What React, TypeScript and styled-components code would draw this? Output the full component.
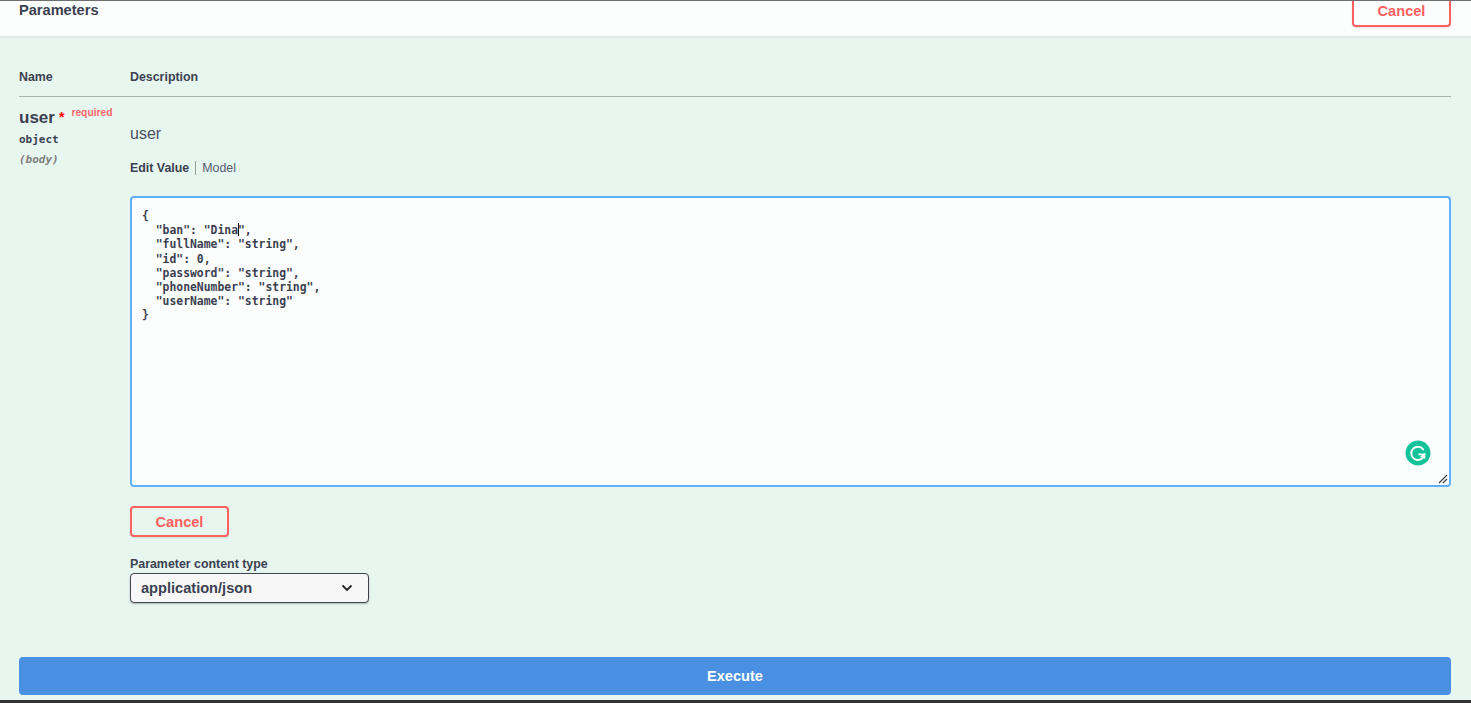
import React from 'react';
import styled, { createGlobalStyle } from 'styled-components';

const Global = createGlobalStyle`
  html, body { margin: 0; padding: 0; background: #e8f6f0; }
  body { font-family: "Liberation Sans", Arial, sans-serif; color: #3b4151; overflow: hidden; }
`;
const Page = styled.div`
  width: 1471px; height: 703px; box-sizing: border-box; display: flex; flex-direction: column;
  border-top: 1px solid #6f6f6f; border-bottom: 3px solid #333; overflow: hidden; background: #e8f6f0;
`;
const Header = styled.header`
  height: 37px; flex: none; box-sizing: border-box; background: #fcfefd; border-bottom: 2px solid #dfe7e3;
  display: flex; justify-content: space-between; align-items: flex-end; padding: 0 20px 9px 19px; overflow: hidden;
`;
const Title = styled.h4`
  margin: 0; align-self: flex-start; font: 700 14.6px/18px "Liberation Sans", Arial, sans-serif; color: #3b4151;
`;
const CancelButton = styled.button`
  width: 99px; flex: none; box-sizing: border-box; border: 2px solid #ff6060; border-radius: 4px;
  background: transparent; color: #ff6060; font: 700 14.6px "Liberation Sans", Arial, sans-serif; padding: 0;
  box-shadow: 0 1px 2px rgba(0,0,0,.1);
`;
const TopCancel = styled(CancelButton)`
  height: 36px; padding-top: 4px;
`;
const Main = styled.main`
  flex: 1; display: flex; flex-direction: column; padding: 0 20px 0 19px;
`;
const HeadRow = styled.div`
  display: grid; grid-template-columns: 111px 1fr; height: 59px; box-sizing: border-box; padding-top: 30px;
  border-bottom: 1px solid #a9b3af; font: 700 12.4px/18px "Liberation Sans", Arial, sans-serif; color: #3b4151;
`;
const BodyRow = styled.div`
  display: grid; grid-template-columns: 111px 1fr;
`;
const NameCell = styled.div`
  display: flex; flex-direction: column; padding-top: 10px;
`;
const NameLine = styled.div`
  display: flex; align-items: flex-start; height: 22px;
`;
const ParamName = styled.span`
  font: 700 17px/22px "Liberation Sans", Arial, sans-serif; color: #3b4151;
`;
const Star = styled.span`
  color: #ff0000; font: 700 14px/22px "Liberation Sans", Arial, sans-serif; margin: -1px 0 0 4px;
`;
const Required = styled.span`
  color: #ff6b6b; font: 700 10.3px/14px "Liberation Sans", Arial, sans-serif; margin: -1px 0 0 7px;
`;
const TypeText = styled.div`
  font: 700 11px/14px "DejaVu Sans Mono", monospace; color: #3b4151; margin-top: 4px;
`;
const InText = styled.div`
  font: italic 700 11px/14px "DejaVu Sans Mono", monospace; color: #7d7d7d; margin-top: 6px;
`;
const DescCell = styled.div`
  display: flex; flex-direction: column; align-items: flex-start; padding-top: 27px;
`;
const DescText = styled.p`
  margin: 0; font: 400 16px/20px "Liberation Sans", Arial, sans-serif; color: #4a5060;
`;
const Tabs = styled.div`
  display: flex; align-items: center; margin-top: 17px; height: 14px; font: 12.4px/14px "Liberation Sans", Arial, sans-serif;
`;
const Tab = styled.span<{ $active?: boolean }>`
  font-weight: ${p => (p.$active ? 700 : 400)};
  color: ${p => (p.$active ? '#3b4151' : '#555e6e')};
  & + & { border-left: 1px solid #9aa39f; margin-left: 6px; padding-left: 6px; }
`;
const Editor = styled.div`
  position: relative; margin-top: 21px; width: 100%; height: 291px; box-sizing: border-box; background: #fcfefd;
  border: 2px solid #61affe; border-radius: 4px; padding: 11px 10px;
`;
const Code = styled.pre`
  margin: 0; font: 700 11.4px/14.2px "DejaVu Sans Mono", monospace; color: #3b4151;
`;
const Caret = styled.span`
  display: inline-block; width: 1px; height: 13px; margin: 0 -1px 0 0; background: #111; vertical-align: -2px;
`;
const Grammarly = styled.svg`
  position: absolute; right: 18px; bottom: 19px; width: 26px; height: 26px;
`;
const Resize = styled.svg`
  position: absolute; right: 1px; bottom: 1px; width: 11px; height: 11px;
`;
const LowerCancel = styled(CancelButton)`
  margin-top: 19px; height: 31px;
`;
const Label = styled.label`
  margin-top: 20px; font: 700 12.4px/14px "Liberation Sans", Arial, sans-serif; color: #3b4151;
`;
const Select = styled.div`
  margin-top: 2px; width: 239px; height: 30px; box-sizing: border-box; display: flex; align-items: center; justify-content: space-between;
  padding: 0 15px 0 10px; background: #f7f7f7; border: 1px solid #41444e; border-radius: 4px;
  box-shadow: 0 1px 2px rgba(0,0,0,.25); font: 700 14.6px "Liberation Sans", Arial, sans-serif; color: #3b4151;
`;
const Execute = styled.button`
  margin-top: 54px; width: 100%; height: 38px; flex: none; border: 0; border-radius: 4px; background: #4990e2; color: #fff;
  font: 700 14.6px "Liberation Sans", Arial, sans-serif; padding: 0;
`;

export default function App() {
  return (
    <Page>
      <Global />
      <Header>
        <Title>Parameters</Title>
        <TopCancel>Cancel</TopCancel>
      </Header>
      <Main>
        <HeadRow><span>Name</span><span>Description</span></HeadRow>
        <BodyRow>
          <NameCell>
            <NameLine>
              <ParamName>user</ParamName><Star>*</Star><Required>required</Required>
            </NameLine>
            <TypeText>object</TypeText>
            <InText>(body)</InText>
          </NameCell>
          <DescCell>
            <DescText>user</DescText>
            <Tabs><Tab $active>Edit Value</Tab><Tab>Model</Tab></Tabs>
            <Editor>
              <Code>{`{
  "ban": "Dina`}<Caret />{`",
  "fullName": "string",
  "id": 0,
  "password": "string",
  "phoneNumber": "string",
  "userName": "string"
}`}</Code>
              <Grammarly viewBox="0 0 26 26" aria-hidden="true">
                <circle cx="13" cy="13" r="12.5" fill="#15c39a" />
                <path d="M18.2 9.4A6.6 6.6 0 1 0 19.4 14.4H14.2" fill="none" stroke="#fff" strokeWidth="1.9" strokeLinecap="round" />
                <path d="M15.8 17.2L19.4 14.4L19.6 18.6" fill="none" stroke="#fff" strokeWidth="1.6" />
              </Grammarly>
              <Resize viewBox="0 0 11 11" aria-hidden="true">
                <path d="M2 10L10 2M6 10L10 6" stroke="#444" strokeWidth="1.2" />
              </Resize>
            </Editor>
            <LowerCancel>Cancel</LowerCancel>
            <Label>Parameter content type</Label>
            <Select>
              application/json
              <svg width="12" height="8" viewBox="0 0 12 8" aria-hidden="true">
                <path d="M1.5 1.5L6 6L10.5 1.5" fill="none" stroke="#222" strokeWidth="1.8" />
              </svg>
            </Select>
          </DescCell>
        </BodyRow>
        <Execute>Execute</Execute>
      </Main>
    </Page>
  );
}
